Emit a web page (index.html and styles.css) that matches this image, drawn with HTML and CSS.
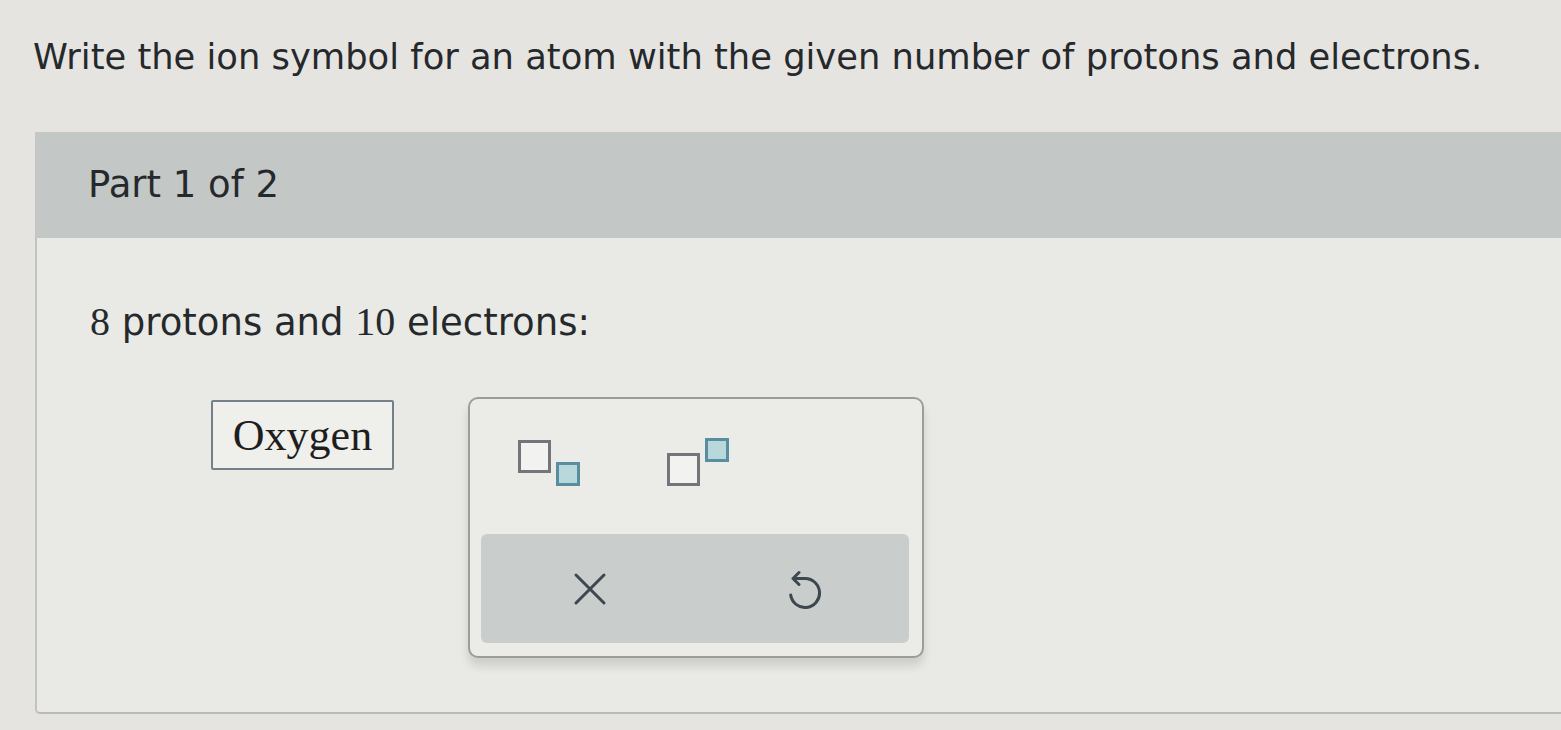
FILE: index.html
```html
<!DOCTYPE html>
<html>
<head>
<meta charset="utf-8">
<link rel="stylesheet" href="styles.css">
</head>
<body>
<h1 class="title">Write the ion symbol for an atom with the given number of protons and electrons.</h1>
<div class="panel">
  <div class="panel-head">Part 1 of 2</div>
  <div class="panel-body">
    <p class="prompt"><span class="num">8</span> protons and <span class="num">10</span> electrons:</p>
    <div class="answer-row">
      <div class="element-box">Oxygen</div>
      <div class="toolbox">
        <div class="tool-row">
          <div class="tool sub">
            <span class="sq big"></span>
            <span class="sq small"></span>
          </div>
          <div class="tool sup">
            <span class="sq big"></span>
            <span class="sq small"></span>
          </div>
        </div>
        <div class="action-bar">
          <div class="action">
            <svg width="34" height="34" viewBox="0 0 34 34"><path d="M3 3 L31 31 M31 3 L3 31" stroke="#3d4750" stroke-width="3" fill="none" stroke-linecap="round"/></svg>
          </div>
          <div class="action">
            <svg width="40" height="40" viewBox="0 0 40 40"><path d="M14 3.5 L8 9.5 L14 15.5 M8 9.5 L20 9.5 A14.5 14.5 0 1 1 5.7 26" stroke="#3d4750" stroke-width="3" fill="none" stroke-linecap="round" stroke-linejoin="round"/></svg>
          </div>
        </div>
      </div>
    </div>
  </div>
</div>
</body>
</html>
```
FILE: styles.css
```css
html, body {
  margin: 0;
  padding: 0;
}
body {
  background: #e5e4e0;
  font-family: "DejaVu Sans", Verdana, sans-serif;
  color: #26292c;
  overflow: hidden;
  width: 1561px;
  height: 730px;
}
.title {
  margin: 0;
  padding: 36px 0 0 33px;
  font-size: 35.3px;
  font-weight: normal;
  white-space: nowrap;
}
.panel {
  margin: 55px 0 0 35px;
  width: 1560px;
}
.panel-head {
  background: #c3c7c5;
  height: 106px;
  box-sizing: border-box;
  padding: 31px 0 0 53px;
  font-size: 37px;
}
.panel-body {
  background: #e9e9e6;
  height: 476px;
  box-sizing: border-box;
  border-left: 2px solid #c2c2be;
  border-bottom: 2px solid #b9b9b5;
  border-bottom-left-radius: 5px;
  padding: 60px 0 0 53px;
}
.prompt {
  margin: 0;
  font-size: 37px;
}
.num {
  font-family: "Liberation Serif", "Times New Roman", serif;
  font-size: 40px;
}
.answer-row {
  display: flex;
  align-items: flex-start;
  margin-top: 52px;
}
.element-box {
  margin: 3px 0 0 121px;
  width: 183px;
  height: 70px;
  box-sizing: border-box;
  border: 2px solid #75818a;
  border-radius: 2px;
  background: #efefec;
  font-family: "Liberation Serif", "Times New Roman", serif;
  font-size: 44px;
  color: #1e1e1e;
  display: flex;
  align-items: center;
  justify-content: center;
}
.toolbox {
  margin-left: 74px;
  width: 456px;
  height: 261px;
  box-sizing: border-box;
  border: 2px solid #9c9c9c;
  border-radius: 10px;
  background: #ebebe8;
  box-shadow: 0 8px 10px rgba(0, 0, 0, 0.12);
  display: flex;
  flex-direction: column;
  padding: 0 13px 13px 11px;
}
.tool-row {
  height: 135px;
  display: flex;
  align-items: center;
  padding-left: 37px;
  gap: 87px;
  box-sizing: border-box;
  padding-bottom: 10px;
}
.tool {
  display: flex;
  height: 48px;
  gap: 5px;
}
.sq {
  display: block;
  box-sizing: border-box;
}
.sq.big {
  width: 33px;
  height: 33px;
  border: 3px solid #76737a;
  background: #f2f2f0;
}
.sq.small {
  width: 24px;
  height: 24px;
  border: 3px solid #5a8d9f;
  background: #b9d8dc;
}
.sub .big { align-self: flex-start; margin-top: 2px; }
.sub .small { align-self: flex-end; }
.sup .big { align-self: flex-end; }
.sup .small { align-self: flex-start; }
.action-bar {
  flex: 1;
  background: #c9cdcb;
  border-radius: 6px;
  display: flex;
  padding-left: 49px;
  gap: 95px;
}
.action {
  width: 120px;
  display: flex;
  align-items: center;
  justify-content: center;
}
```
